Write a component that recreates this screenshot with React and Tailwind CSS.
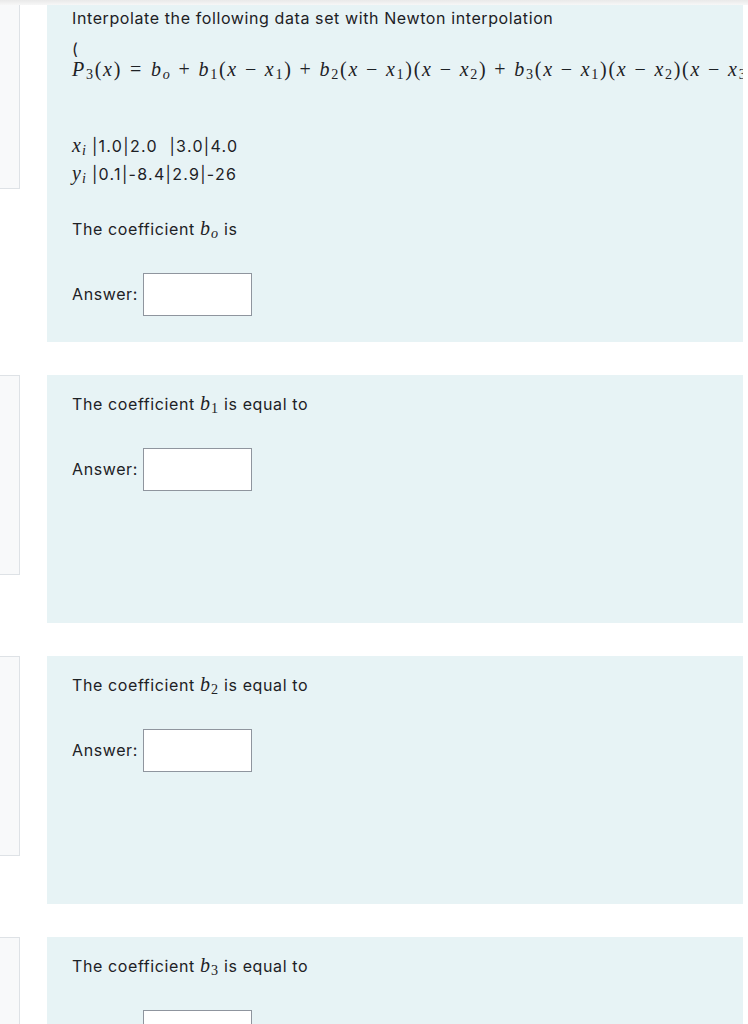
import React from 'react';

const serif = "font-['Liberation_Serif','Times_New_Roman',serif]";

function V({ children }) {
  return <span className={`${serif} italic`}>{children}</span>;
}

function Sub({ children, italic }) {
  return (
    <span className={`${serif} relative top-[0.22em] text-[0.707em] ${italic ? 'italic' : ''}`}>
      {children}
    </span>
  );
}

function Op({ children, wide }) {
  return (
    <span className={`${serif} ${wide ? 'mx-[8px]' : 'mx-[7px]'}`}>{children}</span>
  );
}

function Paren({ children }) {
  return <span className={serif}>{children}</span>;
}

// (x − x_n)
function Term({ n, close = true }) {
  return (
    <>
      <Paren>(</Paren>
      <V>x</V>
      <Op>−</Op>
      <V>x</V>
      <Sub>{n}</Sub>
      {close && <Paren>)</Paren>}
    </>
  );
}

function Formula() {
  return (
    <div className={`${serif} -mt-[3px] h-[22px] whitespace-nowrap text-[20px] leading-[22px] tracking-[1.7px]`}>
      <V>P</V>
      <Sub>3</Sub>
      <Paren>(</Paren>
      <V>x</V>
      <Paren>)</Paren>
      <Op wide>=</Op>
      <V>b</V>
      <Sub italic>o</Sub>
      <Op>+</Op>
      <V>b</V>
      <Sub>1</Sub>
      <Term n="1" />
      <Op>+</Op>
      <V>b</V>
      <Sub>2</Sub>
      <Term n="1" />
      <Term n="2" />
      <Op>+</Op>
      <V>b</V>
      <Sub>3</Sub>
      <Term n="1" />
      <Term n="2" />
      <Term n="3" close={false} />
    </div>
  );
}

function Answer() {
  return (
    <div className="flex items-center mt-[32.5px]">
      <span>Answer:</span>
      <input
        type="text"
        readOnly
        className="ml-[5px] w-[109px] h-[43px] bg-white border border-[#8f959e] outline-none"
      />
    </div>
  );
}

function MathVar({ name, sub, italic }) {
  return (
    <span className="text-[20px] leading-none tracking-[1px]">
      <V>{name}</V>
      <Sub italic={italic}>{sub}</Sub>
    </span>
  );
}

function Coefficient({ sub, italic, suffix }) {
  return (
    <p className="h-[22.5px] leading-[22.5px]">
      The coefficient <MathVar name="b" sub={sub} italic={italic} />
      {suffix}
    </p>
  );
}

function Row({ children, tall }) {
  return (
    <div className="flex items-start">
      <div className="w-[20px] h-[200px] shrink-0 bg-[#f8f9fa] border border-l-0 border-[#dee2e6]" />
      <div
        className={`ml-[27px] w-[696px] shrink-0 overflow-hidden bg-[#e7f3f5] pl-[25px] pt-[18px] pb-[26px] ${
          tall ? 'min-h-[248px]' : ''
        }`}
      >
        {children}
      </div>
    </div>
  );
}

export default function App() {
  return (
    <div className="relative min-h-screen overflow-hidden bg-white font-['Inter','Noto_Sans',sans-serif] text-[16px] tracking-[0.6px] text-[#1d2125]">
      <div className="absolute inset-x-0 top-0 z-10 h-[5px] bg-linear-to-b from-[#e9e9e9] to-[#f7f7f7]" />

      <div className="-mt-[11px] flex flex-col gap-[33px]">
        <Row>
          <p className="h-[22.5px] leading-[22.5px]">Interpolate the following data set with Newton interpolation</p>
          <div className="mt-[8.5px]">
            <p className="h-[22.5px] leading-[22.5px]">(</p>
            <Formula />
          </div>
          <div className="mt-[52px]">
            <p className="h-[28px] leading-[28px] whitespace-pre">
              <MathVar name="x" sub="i" italic /> <span className="tracking-[1.3px]">|1.0|2.0  |3.0|4.0</span>
            </p>
            <p className="h-[28px] leading-[28px] whitespace-pre">
              <MathVar name="y" sub="i" italic /> <span className="tracking-[1.3px]">|0.1|-8.4|2.9|-26</span>
            </p>
          </div>
          <div className="mt-[30px]">
            <Coefficient sub="o" italic suffix=" is" />
          </div>
          <Answer />
        </Row>

        <Row tall>
          <Coefficient sub="1" suffix=" is equal to" />
          <Answer />
        </Row>

        <Row tall>
          <Coefficient sub="2" suffix=" is equal to" />
          <Answer />
        </Row>

        <Row tall>
          <Coefficient sub="3" suffix=" is equal to" />
          <Answer />
        </Row>
      </div>
    </div>
  );
}
